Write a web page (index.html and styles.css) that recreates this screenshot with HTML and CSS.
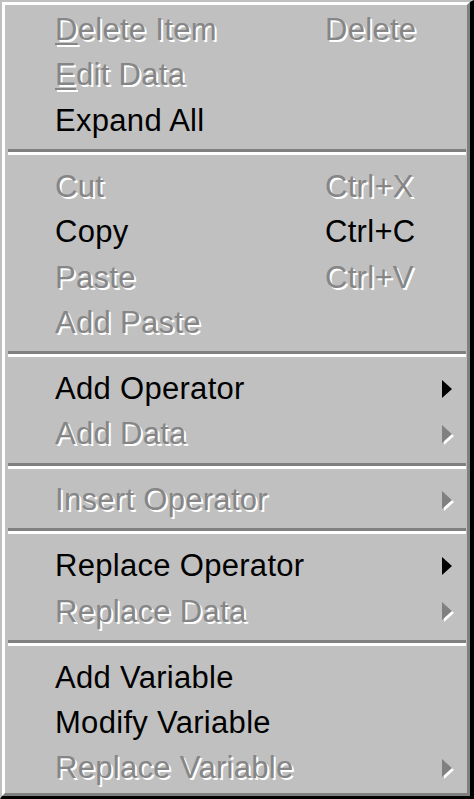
FILE: index.html
```html
<!DOCTYPE html>
<html>
<head>
<meta charset="utf-8">
<link rel="stylesheet" href="styles.css">
</head>
<body>
<div class="menu">
  <div class="menu-inner">
    <div class="item disabled"><span class="label"><u>D</u>elete Item</span><span class="key">Delete</span><span class="sub"></span></div>
    <div class="item disabled"><span class="label"><u>E</u>dit Data</span><span class="key"></span><span class="sub"></span></div>
    <div class="item"><span class="label">Expand All</span><span class="key"></span><span class="sub"></span></div>
    <div class="sep"></div>
    <div class="item disabled"><span class="label">Cut</span><span class="key">Ctrl+X</span><span class="sub"></span></div>
    <div class="item"><span class="label">Copy</span><span class="key">Ctrl+C</span><span class="sub"></span></div>
    <div class="item disabled"><span class="label">Paste</span><span class="key">Ctrl+V</span><span class="sub"></span></div>
    <div class="item disabled"><span class="label">Add Paste</span><span class="key"></span><span class="sub"></span></div>
    <div class="sep"></div>
    <div class="item"><span class="label">Add Operator</span><span class="key"></span><span class="sub"><svg class="arrow" viewBox="0 0 12 20" width="12" height="20"><polygon class="fg" points="1,1 11,10 1,19"/></svg></span></div>
    <div class="item disabled"><span class="label">Add Data</span><span class="key"></span><span class="sub"><svg class="arrow" viewBox="0 0 12 20" width="12" height="20"><polygon class="hl" points="3,3 13,12 3,21"/><polygon class="fg" points="1,1 11,10 1,19"/></svg></span></div>
    <div class="sep"></div>
    <div class="item disabled"><span class="label">Insert Operator</span><span class="key"></span><span class="sub"><svg class="arrow" viewBox="0 0 12 20" width="12" height="20"><polygon class="hl" points="3,3 13,12 3,21"/><polygon class="fg" points="1,1 11,10 1,19"/></svg></span></div>
    <div class="sep"></div>
    <div class="item"><span class="label">Replace Operator</span><span class="key"></span><span class="sub"><svg class="arrow" viewBox="0 0 12 20" width="12" height="20"><polygon class="fg" points="1,1 11,10 1,19"/></svg></span></div>
    <div class="item disabled"><span class="label">Replace Data</span><span class="key"></span><span class="sub"><svg class="arrow" viewBox="0 0 12 20" width="12" height="20"><polygon class="hl" points="3,3 13,12 3,21"/><polygon class="fg" points="1,1 11,10 1,19"/></svg></span></div>
    <div class="sep"></div>
    <div class="item"><span class="label">Add Variable</span><span class="key"></span><span class="sub"></span></div>
    <div class="item"><span class="label">Modify Variable</span><span class="key"></span><span class="sub"></span></div>
    <div class="item disabled"><span class="label">Replace Variable</span><span class="key"></span><span class="sub"><svg class="arrow" viewBox="0 0 12 20" width="12" height="20"><polygon class="hl" points="3,3 13,12 3,21"/><polygon class="fg" points="1,1 11,10 1,19"/></svg></span></div>
  </div>
</div>
</body>
</html>
```
FILE: styles.css
```css
html, body {
  margin: 0;
  padding: 0;
  background: #c0c0c0;
}
.menu {
  width: 474px;
  height: 799px;
  box-sizing: border-box;
  background: #c0c0c0;
  border-style: solid;
  border-width: 2px 4px 3px 2px;
  border-color: #c0c0c0 #000 #000 #c0c0c0;
}
.menu-inner {
  height: 100%;
  box-sizing: border-box;
  border-style: solid;
  border-width: 3px;
  border-color: #fff #808080 #808080 #fff;
  padding: 2px 0;
}
.item {
  display: grid;
  grid-template-columns: 270px 1fr 12px;
  align-items: center;
  height: 45.4px;
  padding: 0 14px 0 50px;
  font-family: "Liberation Sans", Arial, sans-serif;
  font-size: 31px;
  letter-spacing: 0.3px;
  line-height: 45.4px;
  color: #000;
  white-space: nowrap;
}
.item u {
  text-decoration-thickness: 2px;
  text-underline-offset: 3px;
}
.sub {
  display: flex;
  align-items: center;
  height: 100%;
}
.arrow {
  display: block;
  overflow: visible;
}
.arrow .fg {
  fill: #000;
}
.arrow .hl {
  fill: #fff;
}
.disabled {
  color: #868686;
  text-shadow: 2px 2px 0 #fff;
}
.disabled .arrow .fg {
  fill: #808080;
}
.sep {
  height: 0;
  border-top: 3px solid #808080;
  border-bottom: 3px solid #fff;
  margin: 5.8px 1px 8.8px 3px;
}
```
